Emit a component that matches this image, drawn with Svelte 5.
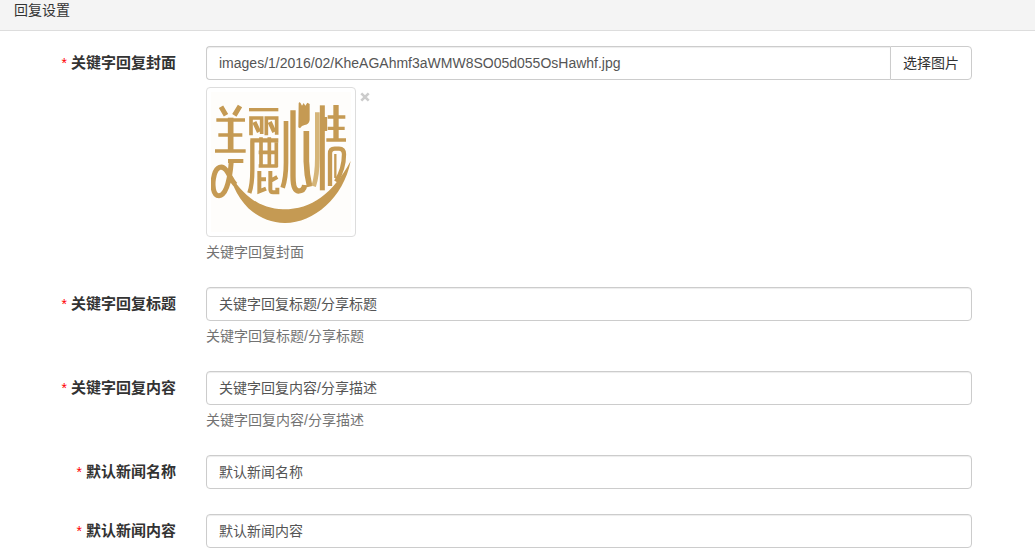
<script>
  let cover = $state('images/1/2016/02/KheAGAhmf3aWMW8SO05d055OsHawhf.jpg');
  let hasCover = $state(true);

  let fields = $state([
    { id: 'title', label: '关键字回复标题', value: '关键字回复标题/分享标题', help: '关键字回复标题/分享标题' },
    { id: 'content', label: '关键字回复内容', value: '关键字回复内容/分享描述', help: '关键字回复内容/分享描述' },
    { id: 'news-name', label: '默认新闻名称', value: '默认新闻名称', help: '' },
    { id: 'news-content', label: '默认新闻内容', value: '默认新闻内容', help: '' }
  ]);

  function removeCover() {
    cover = '';
    hasCover = false;
  }
</script>

<section class="panel">
  <header class="heading">回复设置</header>
  <form class="body">
    <div class="row">
      <label for="cover"><span class="star">*</span> 关键字回复封面</label>
      <div class="field">
        <div class="group">
          <input id="cover" type="text" bind:value={cover} autocomplete="off" />
          <button type="button" class="choose">选择图片</button>
        </div>
        {#if hasCover}
          <div class="preview">
            <div class="thumb">
              <svg viewBox="33 36 420 420" role="img" aria-label="美麗心情">
                <defs>
                  <filter id="soft"><feGaussianBlur stdDeviation="2" /></filter>
                </defs>
                <rect x="33" y="36" width="420" height="420" fill="#fefdfb" />
                <g filter="url(#soft)">
                  <g fill="none" stroke="#c59a52" stroke-width="11">
                    <!-- first character and its looped tail -->
                    <path d="M63 80l15 26M120 78l-17 28" stroke-width="15" />
                    <path d="M49 120h86M55 165h72M45 213h92" stroke-width="11" />
                    <path d="M92 113v100" stroke-width="17" />
                    <path d="M84 243h46" stroke-width="12" />
                    <path d="M94 242C91 285 82 346 57 347C39 347 35 314 43 284C50 260 66 255 78 270C88 283 94 300 106 314" stroke-width="15" />
                    <!-- second character -->
                    <path d="M147 89h88" stroke-width="10" />
                    <path d="M153 166v-52h32v48M199 166v-52h31v50" stroke-width="11" />
                    <path d="M163 126l14 30M209 126l14 30" stroke-width="13" />
                    <path d="M151 181h84M157 181v88q0 45-9 70" stroke-width="13" />
                    <path d="M183 172v90M208 172v90M229 187v74M176 217h57M176 258h57" stroke-width="11" />
                    <path d="M178 273v61l20-8M178 298h20M211 273v55q0 9 8 9h13v-14M212 302l20-11" stroke-width="12" />
                    <!-- third character -->
                    <path d="M258 123v125q0 45-10 75" stroke-width="14" />
                    <path d="M279 91v197q0 44 16 45q17 0 19-18" stroke-width="16" />
                    <path d="M319 153v91q1 40 10 76" stroke-width="17" />
                    <path d="M296 70q2-6 6 0l4 7 5-8 5 8 6-9 7 4v48q-2 14-15 15q-9 1-14 10l-5-3z" fill="#c59a52" stroke="none" />
                    <!-- fourth character -->
                    <path d="M352 97v136q0 52-11 86" stroke="#d5b579" stroke-width="14" />
                    <path d="M367 76v255" stroke-width="15" />
                    <path d="M376 111v42" stroke-width="11" />
                    <path d="M383 111h53M383 145h51M379 180h59" stroke-width="10" />
                    <path d="M408 75v105" stroke-width="16" />
                    <path d="M390 318v-97q0-15 14-15h13q15 0 15 17q0 45-24 82" stroke-width="13" />
                    <path d="M406 222v72" stroke-width="7" />
                  </g>
                  <path d="M88 281C135 355 185 386 249 388C333 389 398 342 452 243C431 354 339 430 254 429C171 427 111 369 88 281Z" fill="#c59a52" />
                </g>
              </svg>
            </div>
            <button type="button" class="remove" aria-label="删除图片" onclick={removeCover}>
              <svg viewBox="0 0 10 10" aria-hidden="true"><path d="M1.3 1.3l7.4 7.4M8.7 1.3L1.3 8.7" /></svg>
            </button>
          </div>
        {/if}
        <p class="help">关键字回复封面</p>
      </div>
    </div>

    {#each fields as field (field.id)}
      <div class="row">
        <label for={field.id}><span class="star">*</span> {field.label}</label>
        <div class="field">
          <input id={field.id} type="text" bind:value={field.value} autocomplete="off" />
          {#if field.help}<p class="help">{field.help}</p>{/if}
        </div>
      </div>
    {/each}
  </form>
</section>

<style>
  :global(body) {
    background: #fff;
    color: #333;
    font: 14px/20px "Liberation Sans", "Noto Sans CJK SC", sans-serif;
  }

  .heading {
    padding: 0 14px 10px;
    border-bottom: 1px solid #ddd;
    background: #f4f4f4;
  }

  .body {
    display: flex;
    flex-direction: column;
    gap: 25px;
    padding: 15px 63px 10px 14px;
  }

  .row {
    display: grid;
    grid-template-columns: 162px minmax(0, 1fr);
    column-gap: 30px;
  }

  label {
    padding-top: 7px;
    font-size: 15px;
    font-weight: bold;
    text-align: right;
  }

  .star {
    color: red;
    font-size: 14px;
    font-weight: normal;
  }

  input {
    display: block;
    box-sizing: border-box;
    width: 100%;
    height: 34px;
    padding: 5px 12px 7px;
    border: 1px solid #ccc;
    border-radius: 4px;
    background: #fff;
    box-shadow: inset 0 1px 1px rgba(0, 0, 0, 0.075);
    color: #555;
    font: inherit;
  }

  input:focus {
    border-color: #66afe9;
    outline: 0;
  }

  .group {
    display: flex;
  }

  .group input {
    flex: 1;
    min-width: 0;
    padding: 6px 12px;
    border-right: 0;
    border-radius: 4px 0 0 4px;
  }

  .choose {
    padding: 6px 12px;
    border: 1px solid #ccc;
    border-radius: 0 4px 4px 0;
    background: #fff;
    color: #333;
    font: inherit;
    white-space: nowrap;
    cursor: pointer;
  }

  .preview {
    display: flex;
    align-items: flex-start;
    gap: 4px;
    margin-top: 7px;
  }

  .thumb {
    box-sizing: border-box;
    width: 150px;
    padding: 4px;
    border: 1px solid #ddd;
    border-radius: 4px;
  }

  .thumb svg {
    display: block;
    width: 100%;
  }

  .remove {
    margin-top: 5px;
    padding: 0;
    border: 0;
    background: none;
    cursor: pointer;
  }

  .remove svg {
    display: block;
    width: 10px;
    height: 10px;
    fill: none;
    stroke: #ccc;
    stroke-width: 2.6;
  }

  .help {
    margin: 5px 0 0;
    color: #737373;
  }
</style>
